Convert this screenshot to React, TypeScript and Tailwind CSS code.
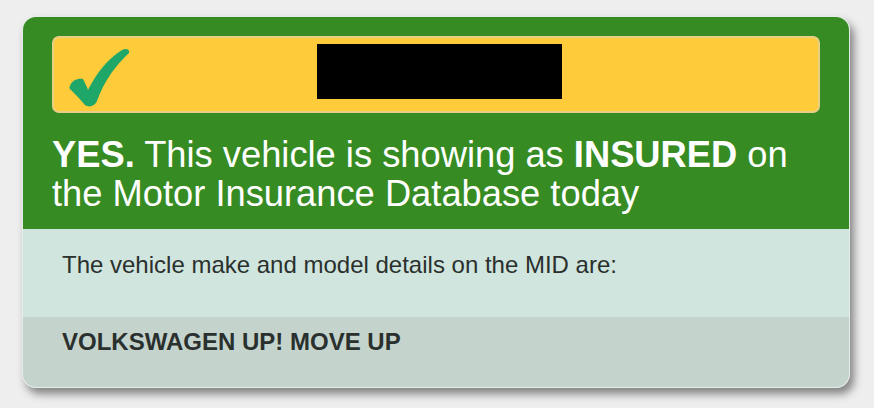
import React from "react";

function BrushCheck() {
  return (
    <svg width="64" height="62" viewBox="0 0 64 62" className="block">
      <path
        d="M1 39 C3 33 9 31 14 32 C16 36 18 40 19 43 C26 29 37 13 53 3 C57 1 61 2 60 6 C47 18 35 34 28 54 C26 59 20 61 16 58 C11 52 6 47 2 43 C0 42 0 40 1 39 Z"
        fill="#1fa76a"
      />
    </svg>
  );
}

export default function App() {
  return (
    <div
      className="min-h-[408px] w-full bg-[#eeeeee] pl-[22px] pt-[16px]"
      style={{ fontFamily: '"Liberation Sans", Arial, Helvetica, sans-serif' }}
    >
      <div className="w-[828px] h-[372px] rounded-[14px] overflow-hidden border border-[#e4ece6] shadow-[4px_6px_8px_rgba(0,0,0,0.45)] flex flex-col">
        <div className="bg-[#368b22] px-[29px] pt-[19px] pb-[16px]">
          <div className="h-[77px] rounded-[7px] border-2 border-[#e7cf86] bg-[#fecb3a] flex items-start relative">
            <div className="absolute left-[15px] top-[9px]">
              <BrushCheck />
            </div>
            <div className="ml-[263px] mt-[6px] w-[245px] h-[55px] bg-black" />
          </div>
          <div className="mt-[22px] text-white text-[36.3px] leading-[39px]">
            <span className="font-bold">YES.</span> This vehicle is showing as{" "}
            <span className="font-bold">INSURED</span> on
            <br />
            the Motor Insurance Database today
          </div>
        </div>
        <div className="bg-[#d0e5de] h-[88px] pl-[39px] pt-[22px] text-[#2a302d] text-[24px] leading-[28px]">
          The vehicle make and model details on the MID are:
        </div>
        <div className="bg-[#c4d4cd] flex-1 pl-[39px] pt-[11px] text-[#2a302d] text-[24px] leading-[28px] font-bold">
          VOLKSWAGEN UP! MOVE UP
        </div>
      </div>
    </div>
  );
}
